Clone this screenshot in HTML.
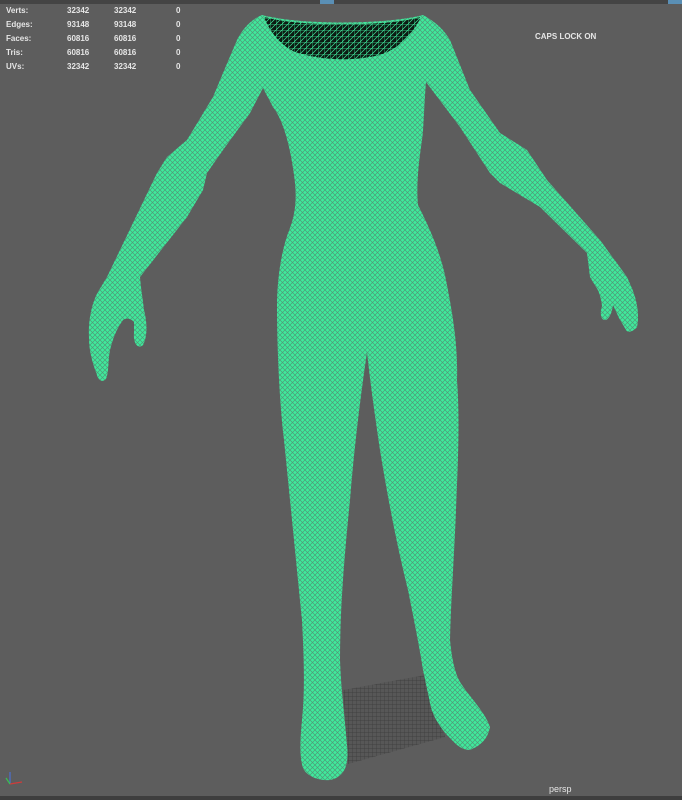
<!DOCTYPE html>
<html><head><meta charset="utf-8"><style>
body{margin:0;width:682px;height:800px;overflow:hidden;background:#5d5d5d;font-family:"Liberation Sans",sans-serif}
.hud{position:absolute;color:#e6e6e6;font-size:8px;font-weight:bold}
</style></head><body>
<svg width="682" height="800" style="position:absolute;left:0;top:0">
<defs>
<pattern id="m" width="5" height="5" patternUnits="userSpaceOnUse">
<rect width="5" height="5" fill="#3fea9c"/>
<path d="M0 5L5 0M0 0L5 5" stroke="#4f9a78" stroke-width="0.7"/>
</pattern>
<pattern id="d" width="6" height="6" patternUnits="userSpaceOnUse">
<rect width="6" height="6" fill="#0c1a12"/>
<path d="M0 0H6M0 0V6M0 6L6 0" stroke="#3fe79c" stroke-width="0.7"/>
</pattern>
<pattern id="g" width="4" height="4" patternUnits="userSpaceOnUse">
<rect width="4" height="4" fill="#575757"/>
<path d="M0 0H4M0 0V4" stroke="#3a3a3a" stroke-width="0.7"/>
</pattern>
</defs>
<rect x="0" y="0" width="682" height="4" fill="#444"/>
<rect x="320" y="0" width="14" height="4" fill="#5a8fb5"/>
<rect x="668" y="0" width="14" height="4" fill="#5a8fb5"/>
<rect x="0" y="796" width="682" height="4" fill="#3e3e3e"/>
<polygon points="343,690 425,675 445,737 348,764" fill="url(#g)"/>
<path fill="url(#m)" d="M262,15 C300,25 385,25 423,15 C436,22 444,30 450,40 L470,90 L500,133 L527,150 L547,180 L600,240 L627,277 C630,284 633,290 634,294 C638,305 639,318 637,327 C633,332 628,333 626,330 L619,318 L613,305 C612,312 610,318 606,320 C600,321 600,312 602,306 C601,298 599,291 596,287 L590,277 L587,253 L540,207 L500,183 L490,173 L460,127 L426,82 C424,105 424,125 422,140 C419,160 416,185 418,205 C428,225 440,250 446,280 C454,320 458,350 457,380 C460,420 458,460 456,510 C454,560 451,600 450,640 C452,660 455,675 462,685 C472,700 485,712 490,727 C488,738 482,745 470,750 C460,750 454,742 450,738 C440,728 432,715 430,703 L423,670 C420,650 414,620 408,590 C398,550 388,500 380,450 C374,410 370,380 367,352 C360,400 354,450 350,500 C344,560 340,610 340,660 C341,690 345,720 347,745 C349,765 345,777 330,780 C318,781 308,776 304,770 C299,760 300,740 302,720 C305,690 304,660 302,620 C297,570 290,500 284,440 C279,400 277,340 277,307 C277,280 281,250 290,228 C296,212 297,195 294,175 C290,145 283,120 273,107 L263,88 L250,113 L223,150 L207,173 L203,190 L187,217 L140,277 C141,290 143,300 144,310 C147,322 148,335 143,345 C138,350 133,343 134,333 L134,322 C130,318 126,318 123,320 C117,328 113,338 110,350 C108,360 109,372 106,379 C102,383 98,380 97,375 C92,362 89,350 89,338 C88,320 92,300 101,287 L107,277 L157,173 L167,157 L187,140 L213,97 L223,73 L237,40 C243,28 252,19 262,15 Z"/>
<path fill="url(#d)" d="M264,17 C300,27 385,27 421,17 C412,35 400,48 380,55 C350,62 320,60 295,52 C280,45 270,32 264,17 Z"/>
<g stroke-width="1.2"><line x1="10" y1="784" x2="10" y2="772" stroke="#4a6fd0"/><line x1="10" y1="784" x2="22" y2="782" stroke="#d03a3a"/><line x1="10" y1="784" x2="6" y2="778" stroke="#3ac050"/></g>
</svg>
<div class="hud" style="left:6px;top:4px;line-height:14px">Verts:<br>Edges:<br>Faces:<br>Tris:<br>UVs:</div>
<div class="hud" style="left:67px;top:4px;line-height:14px">32342<br>93148<br>60816<br>60816<br>32342</div>
<div class="hud" style="left:114px;top:4px;line-height:14px">32342<br>93148<br>60816<br>60816<br>32342</div>
<div class="hud" style="left:176px;top:4px;line-height:14px">0<br>0<br>0<br>0<br>0</div>
<div class="hud" style="left:535px;top:32px">CAPS LOCK ON</div>
<div class="hud" style="left:549px;top:784px;font-weight:normal;font-size:9px">persp</div>
</body></html>
